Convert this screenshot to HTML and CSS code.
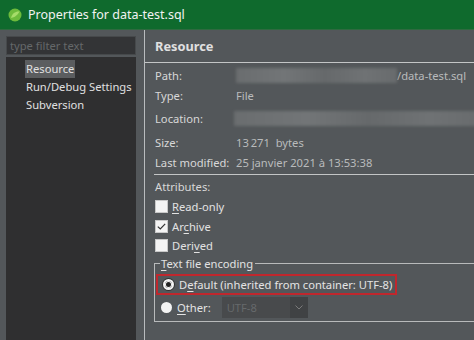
FILE: index.html
```html
<!DOCTYPE html>
<html lang="fr">
<head>
    <meta charset="UTF-8">
    <title>Properties for data-test.sql</title>
    <link rel="stylesheet" href="styles.css">
</head>
<body>
    <div class="window">
        <!-- Title bar -->
        <div class="titlebar">
            <svg class="app-icon" width="14" height="14" viewBox="0 0 14 14">
                <circle cx="7" cy="7" r="6.5" fill="#6dbb3c"/>
                <path d="M3 10 C4 5 8 3 11.5 3.5 C10 6 8 9 3 10 Z" fill="#a6dc6a"/>
            </svg>
            <span>Properties for data-test.sql</span>
        </div>

        <div class="content">
            <!-- Left navigation -->
            <div class="sidebar">
                <div class="filter">type filter text</div>
                <ul class="tree">
                    <li><span class="selected">Resource</span></li>
                    <li><span>Run/Debug Settings</span></li>
                    <li><span>Subversion</span></li>
                </ul>
            </div>

            <!-- Property page -->
            <div class="page">
                <div class="page-title">Resource</div>
                <div class="page-body">
                    <div class="info-row row-path">
                        <span class="label">Path:</span>
                        <span class="value"><span class="blur blur-path"></span>/data-test.sql</span>
                    </div>
                    <div class="info-row row-type">
                        <span class="label">Type:</span>
                        <span class="value">File</span>
                    </div>
                    <div class="info-row row-location">
                        <span class="label">Location:</span>
                        <span class="value"><span class="blur blur-location"></span></span>
                    </div>
                    <div class="info-row row-size">
                        <span class="label">Size:</span>
                        <span class="value">13&#8239;271&nbsp; bytes</span>
                    </div>
                    <div class="info-row row-modified">
                        <span class="label">Last modified:</span>
                        <span class="value">25 janvier 2021 à 13:53:38</span>
                    </div>

                    <div class="divider"></div>

                    <div class="attributes">
                        <div class="section-label">Attributes:</div>
                        <label class="check"><span class="box"></span><span><u>R</u>ead-only</span></label>
                        <label class="check"><span class="box">
                            <svg width="11" height="11" viewBox="0 0 11 11"><path d="M1.8 5.6 L4.3 8 L9.2 2.8" fill="none" stroke="#333" stroke-width="1.2"/></svg>
                        </span><span>Ar<u>c</u>hive</span></label>
                        <label class="check"><span class="box"></span><span>Deri<u>v</u>ed</span></label>
                    </div>

                    <fieldset class="encoding">
                        <legend><u>T</u>ext file encoding</legend>
                        <div class="radio-row focused">
                            <span class="radio on"></span><span>D<u>e</u>fault (inherited from container: UTF-8)</span>
                        </div>
                        <div class="radio-row">
                            <span class="radio"></span><span><u>O</u>ther:</span>
                            <div class="combo">
                                <span class="combo-text">UTF-8</span>
                                <span class="combo-arrow">
                                    <svg width="8" height="5" viewBox="0 0 8 5"><path d="M0.5 0.5 L4 4 L7.5 0.5" fill="none" stroke="#7a7a7a" stroke-width="1"/></svg>
                                </span>
                            </div>
                        </div>
                    </fieldset>
                </div>
            </div>
        </div>
    </div>
</body>
</html>
```

FILE: styles.css
```css
* {
    box-sizing: border-box;
    margin: 0;
    padding: 0;
}

body {
    font-family: 'Noto Sans', 'Open Sans', sans-serif;
    font-size: 11.2px;
    color: #e0e0e0;
    background: #53575a;
    overflow: hidden;
}

.window {
    width: 474px;
    height: 340px;
    display: flex;
    flex-direction: column;
}

.titlebar {
    height: 30px;
    background: #0f6a2d;
    border-bottom: 1px solid #2f6a40;
    display: flex;
    align-items: center;
    gap: 6px;
    padding-left: 8px;
    color: #f2f2f2;
    font-size: 12.5px;
}

.app-icon {
    flex: none;
}

.content {
    flex: 1;
    display: flex;
    min-height: 0;
}

.sidebar {
    flex: none;
    width: 145px;
    padding: 6px 8px 0 6px;
    border-right: 1px solid #b9bcbe;
    display: flex;
    flex-direction: column;
    gap: 2px;
}

.filter {
    height: 19px;
    background: #333436;
    color: #65686a;
    padding-left: 3px;
    line-height: 17px;
    border: 1px solid #46494b;
}

.tree {
    flex: 1;
    list-style: none;
    background: #2f2f30;
    padding: 3px 0 0 19px;
    white-space: nowrap;
}

.tree li {
    height: 18px;
    line-height: 18px;
}

.tree li span {
    padding: 0 1px;
    display: inline-block;
}

.tree .selected {
    background: #5b5d5f;
}

.page {
    flex: 1;
    min-width: 0;
    display: flex;
    flex-direction: column;
}

.page-title {
    height: 33px;
    padding-left: 10px;
    font-size: 12.8px;
    font-weight: bold;
    line-height: 32px;
    border-bottom: 1px solid #c3c5c6;
}

.page-body {
    padding-left: 10px;
}

.info-row {
    display: flex;
    align-items: center;
    color: #d8d8d8;
    white-space: nowrap;
}

.row-path { height: 22px; margin-top: 1px; }
.row-type { height: 19px; }
.row-location { height: 26px; }
.row-size { height: 23px; }
.row-modified { height: 17px; }

.label {
    width: 81px;
    flex: none;
}

.value {
    color: #b9bbbc;
    display: flex;
    align-items: center;
}

.blur {
    display: inline-block;
    height: 15px;
    background: linear-gradient(90deg, #6a6d6f, #727577 30%, #66696b 55%, #6f7274 80%, #686b6d);
    filter: blur(1.5px);
}

.blur-path {
    width: 161px;
}

.blur-location {
    width: 245px;
    margin-left: -2px;
}

.divider {
    height: 1px;
    background: #c3c5c6;
    margin: 3px 0 0 -1px;
}

.attributes {
    display: flex;
    flex-direction: column;
    padding-top: 2px;
}

.section-label {
    height: 20px;
    line-height: 20px;
    color: #d8d8d8;
}

.check {
    display: flex;
    align-items: center;
    gap: 4px;
    height: 19.5px;
    color: #e2e2e2;
}

.box {
    width: 13px;
    height: 13px;
    background: #f4f4f4;
    border: 1px solid #c8c8c8;
    display: flex;
    align-items: center;
    justify-content: center;
}

u {
    text-decoration-thickness: 1px;
    text-underline-offset: 2px;
}

.encoding {
    border: 1px solid #b8babb;
    border-right: none;
    margin: 1px 0 0 -1px;
    padding: 3px 0 0 0;
    height: 65px;
}

.encoding legend {
    margin-left: 5px;
    padding: 0 2px 0 1px;
    line-height: 14px;
    color: #e2e2e2;
}

.radio-row {
    display: flex;
    align-items: center;
    gap: 5px;
    height: 21px;
    padding-left: 6px;
    color: #e4e4e4;
    white-space: nowrap;
}

.radio-row.focused {
    width: fit-content;
    margin-left: 1px;
    padding: 0 3px 0 5px;
    border: 2px solid #c0272d;
}

.radio {
    width: 11px;
    height: 11px;
    border-radius: 50%;
    background: #f4f4f4;
    flex: none;
}

.radio.on {
    border: 2px solid #f4f4f4;
    background: #222;
    box-shadow: inset 0 0 0 1px #f4f4f4, 0 0 0 1px #333;
}

.radio-row + .radio-row {
    height: 24px;
    padding-top: 1px;
}

.combo {
    display: flex;
    width: 86px;
    height: 21px;
    margin-left: 6px;
    background: #484a4c;
}

.combo-text {
    flex: 1;
    padding-left: 5px;
    line-height: 21px;
    color: #66696b;
}

.combo-arrow {
    width: 18px;
    background: #404244;
    display: flex;
    align-items: center;
    justify-content: center;
}
```
